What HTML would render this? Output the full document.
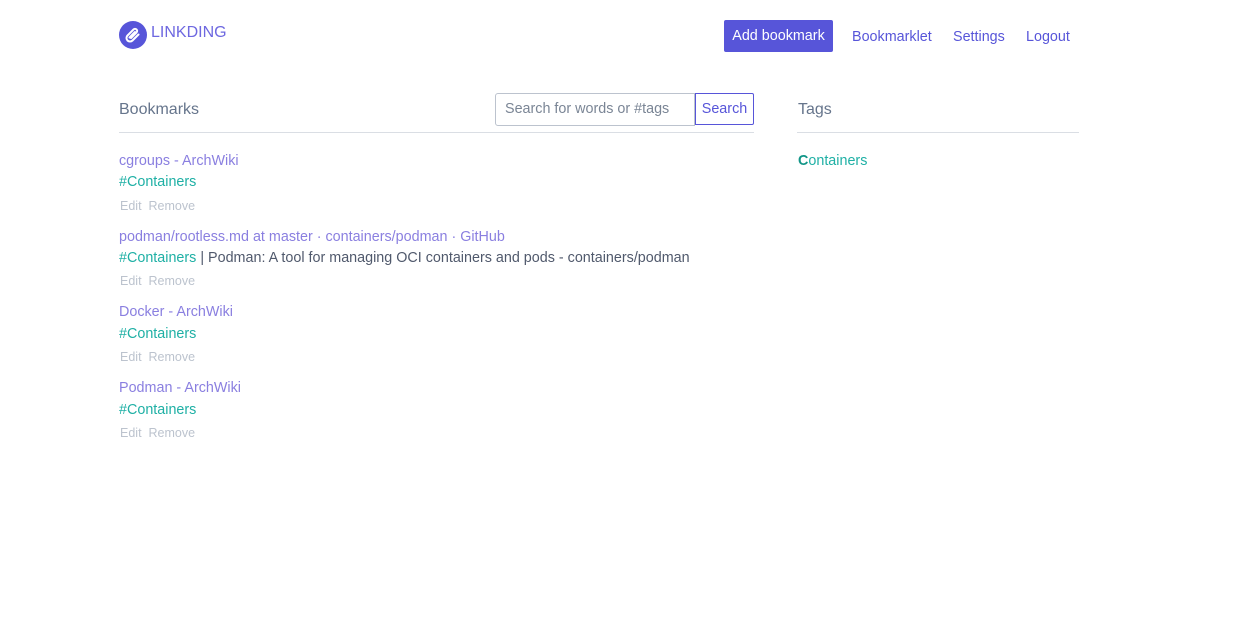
<!DOCTYPE html>
<html><head><meta charset="utf-8"><style>
*{box-sizing:border-box;margin:0;padding:0}
body{width:1248px;height:644px;background:#fff;font-family:"Liberation Sans",sans-serif;font-size:14.35px;color:#50596c;position:relative;overflow:hidden}
.a{position:absolute;white-space:nowrap}
.p{color:#5755d9}
.v{color:#8a7fe0}
.t{color:#1fb0a5}
.m{color:#bcc3ce;font-size:12.5px}
.line{position:absolute;height:1px;background:#dadee4}
</style></head><body>
<svg class="a" style="left:119px;top:21px" width="28" height="28" viewBox="0 0 28 28"><circle cx="14" cy="14" r="14" fill="#5755d9"/><g fill="none" stroke="#fff" stroke-width="2" stroke-linecap="round"><path d="M12 17 L17.5 11.5 a2 2 0 0 0 -3 -3 L8.5 14.5 a3.5 3.5 0 0 0 5 5 L19.5 13.5"/><path d="M16 11 L10.5 16.5"/></g></svg>
<div class="a p" style="left:151px;top:24px;font-size:16px;color:#6e68e0">LINKDING</div>
<div class="a" style="left:724px;top:20px;width:109px;height:32px;background:#5755d9;border-radius:2px;color:#fff;text-align:center;line-height:32px">Add bookmark</div>
<div class="a p" style="left:852px;top:29px">Bookmarklet</div>
<div class="a p" style="left:953px;top:29px">Settings</div>
<div class="a p" style="left:1026px;top:29px">Logout</div>

<div class="a" style="left:119px;top:101px;font-size:16px;color:#66758c">Bookmarks</div>
<div class="a" style="left:495px;top:93px;width:200px;height:33px;border:1px solid #bcc3ce;border-radius:3px 0 0 3px;color:#7a8595;line-height:31px;padding-left:9px">Search for words or #tags</div>
<div class="a p" style="left:695px;top:93px;width:59px;height:32px;border:1px solid #5755d9;border-radius:0 2px 2px 0;text-align:center;line-height:30px">Search</div>
<div class="line" style="left:119px;top:132px;width:635px"></div>

<div class="a" style="left:798px;top:101px;font-size:16px;color:#66758c">Tags</div>
<div class="line" style="left:797px;top:132px;width:282px"></div>
<div class="a t" style="left:798px;top:153px"><b style="color:#129688">C</b>ontainers</div>

<div class="a v" style="left:119px;top:153px">cgroups - ArchWiki</div>
<div class="a t" style="left:119px;top:174px">#Containers</div>
<div class="a m" style="left:120px;top:199px">Edit&nbsp; Remove</div>

<div class="a v" style="left:119px;top:229px">podman/rootless.md at master · containers/podman · GitHub</div>
<div class="a" style="left:119px;top:250px"><span class="t">#Containers</span> | Podman: A tool for managing OCI containers and pods - containers/podman</div>
<div class="a m" style="left:120px;top:274px">Edit&nbsp; Remove</div>

<div class="a v" style="left:119px;top:304px">Docker - ArchWiki</div>
<div class="a t" style="left:119px;top:326px">#Containers</div>
<div class="a m" style="left:120px;top:350px">Edit&nbsp; Remove</div>

<div class="a v" style="left:119px;top:380px">Podman - ArchWiki</div>
<div class="a t" style="left:119px;top:402px">#Containers</div>
<div class="a m" style="left:120px;top:426px">Edit&nbsp; Remove</div>
</body></html>
